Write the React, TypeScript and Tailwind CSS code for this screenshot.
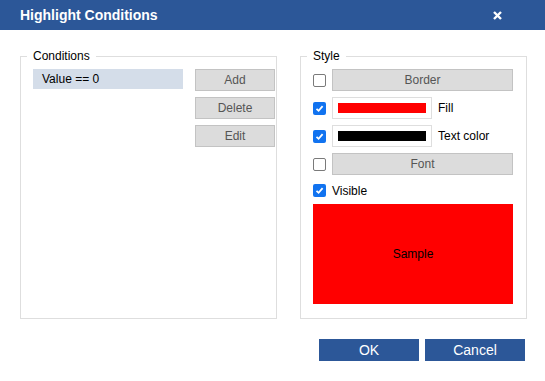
import React from "react"

const font = { fontFamily: '"Liberation Sans", Arial, sans-serif' }

function Check({ checked }: { checked: boolean }) {
  if (!checked)
    return <div className="w-[13px] h-[13px] shrink-0 rounded-[2px] border border-[#7a7a7a] bg-white" />
  return (
    <div className="w-[13px] h-[13px] shrink-0 rounded-[2px] bg-[#1173f0] flex items-center justify-center">
      <svg width="9" height="9" viewBox="0 0 9 9">
        <path d="M1.5 4.8 L3.6 6.8 L7.6 2.2" stroke="white" strokeWidth="1.8" fill="none" />
      </svg>
    </div>
  )
}

function GrayButton({ label, className = "" }: { label: string; className?: string }) {
  return (
    <div
      className={
        "h-[22px] flex items-center justify-center bg-[#dcdcdc] border border-[#c3c3c3] text-[12px] text-[#555] " +
        className
      }
    >
      {label}
    </div>
  )
}

function Group({ title, className, children }: { title: string; className: string; children: React.ReactNode }) {
  return (
    <div className={"relative border border-[#dedede] " + className}>
      <span className="absolute left-[6px] top-[-8px] bg-white px-[6px] text-[12px] leading-[14px] text-black">
        {title}
      </span>
      {children}
    </div>
  )
}

function Swatch({ color }: { color: string }) {
  return (
    <div className="w-[100px] h-[22px] border border-[#dedede] bg-white flex items-center px-[5px]">
      <div className="w-full h-[10px]" style={{ background: color }} />
    </div>
  )
}

export default function App() {
  return (
    <div className="w-[545px] h-[381px] bg-white flex flex-col" style={font}>
      <div className="h-[30px] bg-[#2c5798] flex items-center justify-between pl-[20px] pr-[43px]">
        <span className="text-white font-bold text-[14px]">Highlight Conditions</span>
        <svg width="9" height="9" viewBox="0 0 9 9">
          <path d="M1 1 L8 8 M8 1 L1 8" stroke="white" strokeWidth="2.4" />
        </svg>
      </div>

      <div className="flex gap-[23px] pl-[20px] pt-[26px]">
        <Group title="Conditions" className="w-[257px] h-[263px] flex gap-[12px] pl-[12px] pt-[12px]">
          <div className="w-[150px] h-[20px] bg-[#d4dde9] pl-[9px] flex items-center text-[12px] text-black">
            Value == 0
          </div>
          <div className="flex flex-col gap-[6px]">
            <GrayButton label="Add" className="w-[80px]" />
            <GrayButton label="Delete" className="w-[80px]" />
            <GrayButton label="Edit" className="w-[80px]" />
          </div>
        </Group>

        <Group title="Style" className="w-[227px] h-[263px] flex flex-col pl-[12px] pt-[12px]">
          <div className="flex flex-col gap-[6px]">
            <div className="flex items-center gap-[6px]">
              <Check checked={false} />
              <GrayButton label="Border" className="w-[181px]" />
            </div>
            <div className="flex items-center gap-[6px]">
              <Check checked />
              <Swatch color="#ff0000" />
              <span className="text-[12px] text-black">Fill</span>
            </div>
            <div className="flex items-center gap-[6px]">
              <Check checked />
              <Swatch color="#000000" />
              <span className="text-[12px] text-black">Text color</span>
            </div>
            <div className="flex items-center gap-[6px]">
              <Check checked={false} />
              <GrayButton label="Font" className="w-[181px]" />
            </div>
            <div className="h-[19px] flex items-center gap-[6px]">
              <Check checked />
              <span className="text-[12px] text-black">Visible</span>
            </div>
          </div>
          <div className="mt-[4px] w-[200px] h-[100px] bg-[#ff0000] flex items-center justify-center text-[12px] text-black">
            Sample
          </div>
        </Group>
      </div>

      <div className="flex justify-end gap-[6px] pr-[20px] mt-[20px]">
        <div className="w-[100px] h-[22px] bg-[#2c5798] text-white text-[14px] flex items-center justify-center">
          OK
        </div>
        <div className="w-[100px] h-[22px] bg-[#2c5798] text-white text-[14px] flex items-center justify-center">
          Cancel
        </div>
      </div>
    </div>
  )
}
